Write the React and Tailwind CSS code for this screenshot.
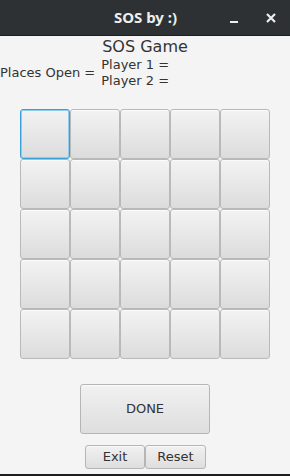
import React from "react";

const cellClass =
  "h-[50px] w-[50px] rounded-[3px] border bg-gradient-to-b from-[#f3f3f3] to-[#dcdcdc]";

function Cell({ focused }) {
  return (
    <button
      type="button"
      className={
        cellClass +
        (focused
          ? " border-[#3a9fd6] shadow-[inset_0_0_0_1px_#8fcdee]"
          : " border-[#b9b9b9] shadow-[inset_0_1px_0_#fbfbfb]")
      }
    />
  );
}

function PlainButton({ className, children }) {
  return (
    <button
      type="button"
      className={
        "flex items-center justify-center rounded-[3px] border border-[#b5b5b5] bg-gradient-to-b from-[#f1f1f1] to-[#dedede] text-[13px] text-[#333] shadow-[inset_0_1px_0_#fafafa] " +
        className
      }
    >
      {children}
    </button>
  );
}

export default function App() {
  const cells = Array.from({ length: 25 }, (_, i) => i);

  return (
    <div className="flex h-[476px] w-[290px] flex-col overflow-hidden bg-[#f4f4f4] font-['DejaVu_Sans',sans-serif] text-[#333]">
      {/* title bar */}
      <div className="relative flex h-[36px] shrink-0 items-center justify-center border-b border-[#1c1f21] bg-[#2d3134]">
        <span className="pl-[1px] font-['Noto_Sans',sans-serif] text-[15px] font-bold text-[#eeeeec]">
          SOS by :)
        </span>
        <div className="absolute right-0 top-0 flex h-[35px] items-center">
          <svg width="12" height="12" viewBox="0 0 12 12" className="mr-[25px] mt-[2px]">
            <rect x="2" y="8" width="8" height="2" fill="#eeeeec" />
          </svg>
          <svg width="12" height="12" viewBox="0 0 12 12" className="mr-[13px]">
            <path d="M2 2 L10 10 M10 2 L2 10" stroke="#eeeeec" strokeWidth="2.2" />
          </svg>
        </div>
      </div>

      <div className="mt-[1px] text-center text-[16px] leading-[19px]">SOS Game</div>

      <div className="mt-[1px] flex items-center text-[13px] leading-[16px]">
        <span>Places Open =</span>
        <div className="ml-[6px] flex flex-col">
          <span>Player 1 =</span>
          <span>Player 2 =</span>
        </div>
      </div>

      <div className="mx-auto mt-[20px] grid w-[250px] grid-cols-5">
        {cells.map((i) => (
          <Cell key={i} focused={i === 0} />
        ))}
      </div>

      <PlainButton className="mx-auto mt-[25px] h-[50px] w-[130px]">DONE</PlainButton>

      <div className="mx-auto mt-[11px] flex pl-[1px]">
        <PlainButton className="h-[24px] w-[60px]">Exit</PlainButton>
        <PlainButton className="h-[24px] w-[61px]">Reset</PlainButton>
      </div>

      <div className="flex-1" />
      <div className="h-[2px] bg-[#1c1f21]" />
    </div>
  );
}
